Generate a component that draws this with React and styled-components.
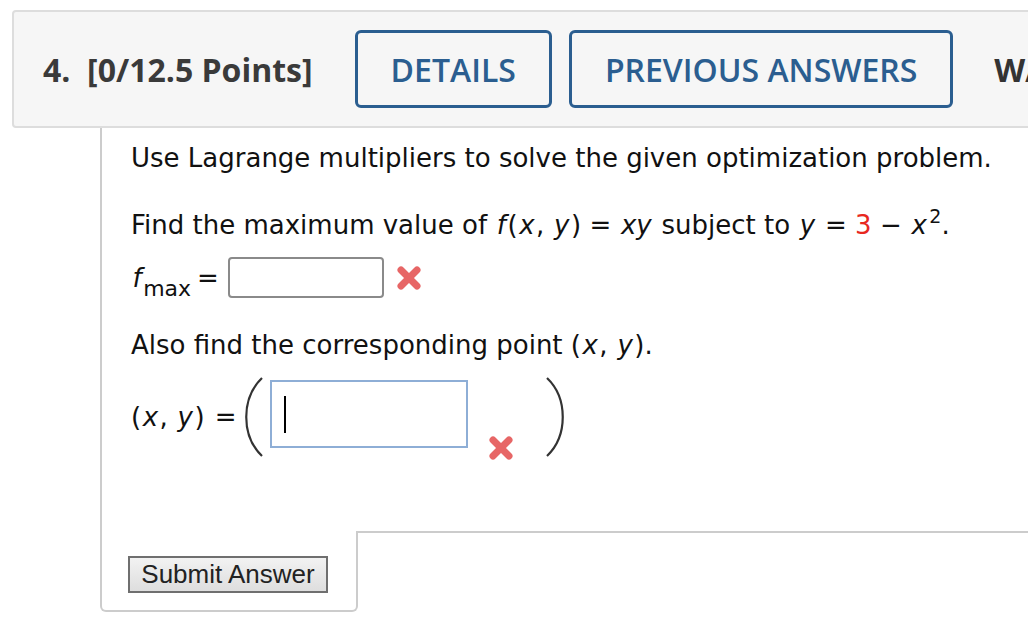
import React from "react";
import styled, { createGlobalStyle } from "styled-components";

const GlobalStyle = createGlobalStyle`
  html, body {
    margin: 0;
    padding: 0;
    background: #ffffff;
  }
  body {
    width: 1028px;
    height: 624px;
    overflow: hidden;
  }
`;

const Page = styled.div`
  padding-top: 10px;
  width: 1028px;
  overflow: hidden;
`;

const Header = styled.div`
  margin-left: 12px;
  width: 1100px;
  height: 114px;
  box-sizing: content-box;
  background: #f6f6f6;
  border: 2px solid #dddddd;
  border-radius: 4px;
  display: flex;
  align-items: center;
  padding-left: 29px;
  font-family: "Open Sans", sans-serif;
`;

const Title = styled.div`
  font-size: 32px;
  font-weight: 700;
  color: #3a3a3a;
  margin-right: 42px;
  white-space: nowrap;
`;

const TabButton = styled.div`
  height: 78px;
  padding: 0 33px;
  box-sizing: border-box;
  display: flex;
  align-items: center;
  border: 3px solid #2b5e90;
  border-radius: 6px;
  color: #2b5e90;
  font-size: 32px;
  font-weight: 600;
  margin-right: 17px;
  white-space: nowrap;
`;

const Cut = styled.div`
  margin-left: 24px;
  font-size: 32px;
  font-weight: 700;
  color: #333;
  white-space: nowrap;
`;

const Question = styled.div`
  margin-left: 100px;
  border-left: 2px solid #cccccc;
  padding: 14px 0 73px 29px;
  font-family: "DejaVu Sans", Verdana, sans-serif;
  font-size: 26px;
  color: #111;
`;

const TextLine = styled.div`
  height: 32px;
  line-height: 32px;
  margin-bottom: ${(p) => p.gap || 0}px;
  white-space: nowrap;
`;

const Row = styled.div`
  display: flex;
  align-items: center;
  height: ${(p) => p.h}px;
  margin-bottom: ${(p) => p.gap || 0}px;
  white-space: nowrap;
`;

const I = styled.i`
  font-style: italic;
  margin: 0 1.5px;
`;

const Red = styled.span`
  color: #e8281e;
`;

const Sup = styled.span`
  font-size: 19px;
  position: relative;
  top: -11px;
  margin-left: 1px;
`;

const Sub = styled.span`
  font-size: 22px;
  position: relative;
  top: 11px;
`;

const Eq = styled.span`
  margin: 0 ${(p) => p.right}px 0 ${(p) => p.left}px;
`;

const Input = styled.div`
  width: ${(p) => p.w}px;
  height: ${(p) => p.h}px;
  box-sizing: border-box;
  border: ${(p) => (p.focus ? "2px solid #8eaed6" : "2px solid #8a8a8a")};
  border-radius: ${(p) => (p.focus ? 0 : 4)}px;
  background: #fff;
  display: flex;
  align-items: center;
  padding-left: 12px;
  flex: none;
  align-self: ${(p) => (p.top ? "flex-start" : "center")};
  margin-top: ${(p) => p.top || 0}px;
`;

const Caret = styled.div`
  width: 2px;
  height: 37px;
  background: #000;
`;

const XWrap = styled.span`
  display: inline-flex;
  flex: none;
  margin-left: ${(p) => p.left}px;
  margin-right: ${(p) => p.right || 0}px;
  align-self: ${(p) => (p.low ? "flex-end" : "center")};
  margin-bottom: ${(p) => (p.low ? -3 : 0)}px;
`;

const Paren = styled.svg`
  display: block;
  flex: none;
  overflow: visible;
  margin: 0 ${(p) => p.$right}px 0 ${(p) => p.$left}px;
`;

const Footer = styled.div`
  display: flex;
  margin-left: 100px;
`;

const SubmitBox = styled.div`
  width: 228px;
  height: 54px;
  border: 2px solid #cccccc;
  border-top: none;
  border-radius: 0 0 6px 6px;
  padding: 25px 0 0 26px;
  box-sizing: content-box;
`;

const Rest = styled.div`
  flex: 1;
  border-top: 2px solid #cccccc;
`;

const SubmitButton = styled.button`
  font-family: "Liberation Sans", Arial, sans-serif;
  font-size: 26px;
  color: #222;
  background: linear-gradient(#f2f2f2, #dedede);
  border: 2px solid #6f6f6f;
  width: 200px;
  height: 37px;
  padding: 0;
  margin: 0;
`;

const XMark = () => (
  <svg width="26" height="26" viewBox="0 0 26 26">
    <g stroke="#e65a5a" strokeWidth="7" strokeLinecap="round" opacity="0.92">
      <line x1="5" y1="5" x2="21" y2="21" />
      <line x1="21" y1="5" x2="5" y2="21" />
    </g>
  </svg>
);

const BigParen = ({ right, left = 0, after = 0 }) => (
  <Paren width="20" height="82" viewBox="0 0 20 82" $left={left} $right={after}>
    <path
      d={right ? "M2 2 C23 22 23 60 2 80" : "M18 2 C-3 22 -3 60 18 80"}
      fill="none"
      stroke="#333"
      strokeWidth="2.2"
    />
  </Paren>
);

export default function App() {
  return (
    <>
      <GlobalStyle />
      <Page>
        <Header>
          <Title>4.&nbsp; [0/12.5 Points]</Title>
          <TabButton>DETAILS</TabButton>
          <TabButton>PREVIOUS ANSWERS</TabButton>
          <Cut>WA</Cut>
        </Header>
        <Question>
          <TextLine gap={35}>
            Use Lagrange multipliers to solve the given optimization problem.
          </TextLine>
          <TextLine gap={16}>
            Find the maximum value of <I>f</I>(<I>x</I>, <I>y</I>) = <I>xy</I> subject to{" "}
            <I>y</I> = <Red>3</Red> − <I>x</I>
            <Sup>2</Sup>.
          </TextLine>
          <Row h={41} gap={31}>
            <I>f</I>
            <Sub>max</Sub>
            <Eq left={6} right={9}>=</Eq>
            <Input w={156} h={41} />
            <XWrap left={12}>
              <XMark />
            </XWrap>
          </Row>
          <TextLine gap={15}>
            Also find the corresponding point (<I>x</I>, <I>y</I>).
          </TextLine>
          <Row h={82}>
            <span>
              (<I>x</I>, <I>y</I>)
            </span>
            <Eq left={10} right={8}>=</Eq>
            <BigParen after={6} />
            <Input w={198} h={68} top={4} focus>
              <Caret />
            </Input>
            <XWrap left={20} right={31} low>
              <XMark />
            </XWrap>
            <BigParen right />
          </Row>
        </Question>
        <Footer>
          <SubmitBox>
            <SubmitButton>Submit Answer</SubmitButton>
          </SubmitBox>
          <Rest />
        </Footer>
      </Page>
    </>
  );
}
